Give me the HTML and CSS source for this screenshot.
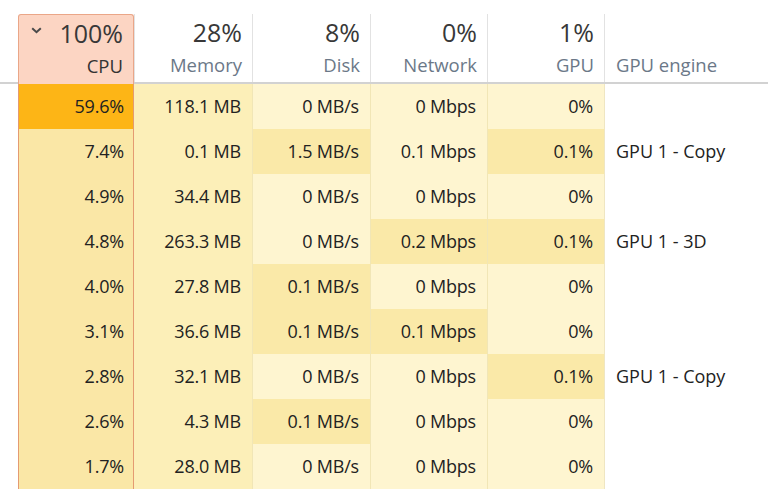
FILE: index.html
```html
<!DOCTYPE html>
<html>
<head>
<meta charset="utf-8">
<link rel="stylesheet" href="styles.css">
</head>
<body>
<div class="tm">
  <div class="head">
    <div class="lead"></div>
    <div class="hc cpu-h">
      <div class="pct"><svg class="chev" width="11" height="7" viewBox="0 0 11 7"><path d="M1.2 1.2 L5.5 5.2 L9.8 1.2" fill="none" stroke="#4a4a4a" stroke-width="2"/></svg><span>100%</span></div>
      <div class="lbl sorted">CPU</div>
    </div>
    <div class="hc"><div class="pct"><span>28%</span></div><div class="lbl">Memory</div></div>
    <div class="hc"><div class="pct"><span>8%</span></div><div class="lbl">Disk</div></div>
    <div class="hc"><div class="pct"><span>0%</span></div><div class="lbl">Network</div></div>
    <div class="hc"><div class="pct"><span>1%</span></div><div class="lbl">GPU</div></div>
    <div class="hc eng"><div class="pct"></div><div class="lbl">GPU engine</div></div>
  </div>

  <div class="row">
    <div class="c cpu hot">59.6%</div><div class="c mem">118.1 MB</div><div class="c">0 MB/s</div><div class="c">0 Mbps</div><div class="c">0%</div><div class="e"></div>
  </div>
  <div class="row">
    <div class="c cpu">7.4%</div><div class="c mem">0.1 MB</div><div class="c act">1.5 MB/s</div><div class="c">0.1 Mbps</div><div class="c act">0.1%</div><div class="e">GPU 1 - Copy</div>
  </div>
  <div class="row">
    <div class="c cpu">4.9%</div><div class="c mem">34.4 MB</div><div class="c">0 MB/s</div><div class="c">0 Mbps</div><div class="c">0%</div><div class="e"></div>
  </div>
  <div class="row">
    <div class="c cpu">4.8%</div><div class="c mem">263.3 MB</div><div class="c">0 MB/s</div><div class="c act">0.2 Mbps</div><div class="c act">0.1%</div><div class="e">GPU 1 - 3D</div>
  </div>
  <div class="row">
    <div class="c cpu">4.0%</div><div class="c mem">27.8 MB</div><div class="c act">0.1 MB/s</div><div class="c">0 Mbps</div><div class="c">0%</div><div class="e"></div>
  </div>
  <div class="row">
    <div class="c cpu">3.1%</div><div class="c mem">36.6 MB</div><div class="c act">0.1 MB/s</div><div class="c act">0.1 Mbps</div><div class="c">0%</div><div class="e"></div>
  </div>
  <div class="row">
    <div class="c cpu">2.8%</div><div class="c mem">32.1 MB</div><div class="c">0 MB/s</div><div class="c">0 Mbps</div><div class="c act">0.1%</div><div class="e">GPU 1 - Copy</div>
  </div>
  <div class="row">
    <div class="c cpu">2.6%</div><div class="c mem">4.3 MB</div><div class="c act">0.1 MB/s</div><div class="c">0 Mbps</div><div class="c">0%</div><div class="e"></div>
  </div>
  <div class="row">
    <div class="c cpu">1.7%</div><div class="c mem">28.0 MB</div><div class="c">0 MB/s</div><div class="c">0 Mbps</div><div class="c">0%</div><div class="e"></div>
  </div>
</div>
</body>
</html>
```

FILE: styles.css
```css
html, body {
  margin: 0;
  padding: 0;
  background: #ffffff;
}
body {
  font-family: "Open Sans", "Noto Sans", sans-serif;
  color: #222222;
  width: 768px;
  height: 493px;
  overflow: hidden;
}
.tm {
  display: flex;
  flex-direction: column;
}
.head {
  display: flex;
  height: 82px;
  border-bottom: 2px solid #d2d2d2;
  align-items: flex-end;
}
.lead {
  width: 18px;
  flex: none;
}
.hc {
  box-sizing: border-box;
  width: 118px;
  flex: none;
  height: 68px;
  border-left: 1px solid #e2e2e2;
  padding: 3px 10px 0 0;
  display: flex;
  flex-direction: column;
}
.hc:nth-child(2) { width: 116px; }
.hc:nth-child(5), .hc:nth-child(6) { width: 117px; }
.hc.cpu-h {
  background: #fcd5c3;
  border: 1px solid #eaa688;
  border-bottom: none;
  border-radius: 3px 3px 0 0;
  height: 70px;
  margin-bottom: -2px;
  position: relative;
  z-index: 1;
}
.hc.eng {
  flex: 1;
  padding: 3px 0 0 11px;
}
.pct {
  height: 30px;
  font-size: 25px;
  line-height: 30px;
  color: #383838;
  display: flex;
  align-items: center;
  justify-content: flex-end;
}
.pct .chev {
  margin: 0 auto 5px 12px;
}
.lbl {
  margin-top: 3px;
  height: 30px;
  line-height: 30px;
  font-size: 18.5px;
  color: #6b7888;
  text-align: right;
}
.lbl.sorted { color: #333333; }
.eng .lbl { text-align: left; }

.row {
  display: flex;
  height: 45px;
  padding-left: 18px;
}
.c {
  box-sizing: border-box;
  width: 118px;
  flex: none;
  background: #fef5d0;
  border-left: 1px solid #f1e6b6;
  font-size: 18px;
  line-height: 45px;
  text-align: right;
  padding-right: 11px;
  color: #222222;
  letter-spacing: -0.2px;
}
.c:nth-child(1) { width: 116px; }
.c:nth-child(4), .c:nth-child(5) { width: 117px; }
.c.cpu {
  background: #fae7a6;
  border-left: 1px solid #e49b72;
  border-right: 1px solid #e49b72;
  padding-right: 9px;
}
.c.cpu.hot {
  background: #fdb516;
}
.c.mem {
  background: #fcefb8;
  border-left: none;
}
.c.act {
  background: #fae9a8;
}
.e {
  flex: 1;
  border-left: 1px solid #efe6c2;
  padding-left: 11px;
  font-size: 18px;
  line-height: 45px;
  color: #222222;
  background: #ffffff;
}
```
